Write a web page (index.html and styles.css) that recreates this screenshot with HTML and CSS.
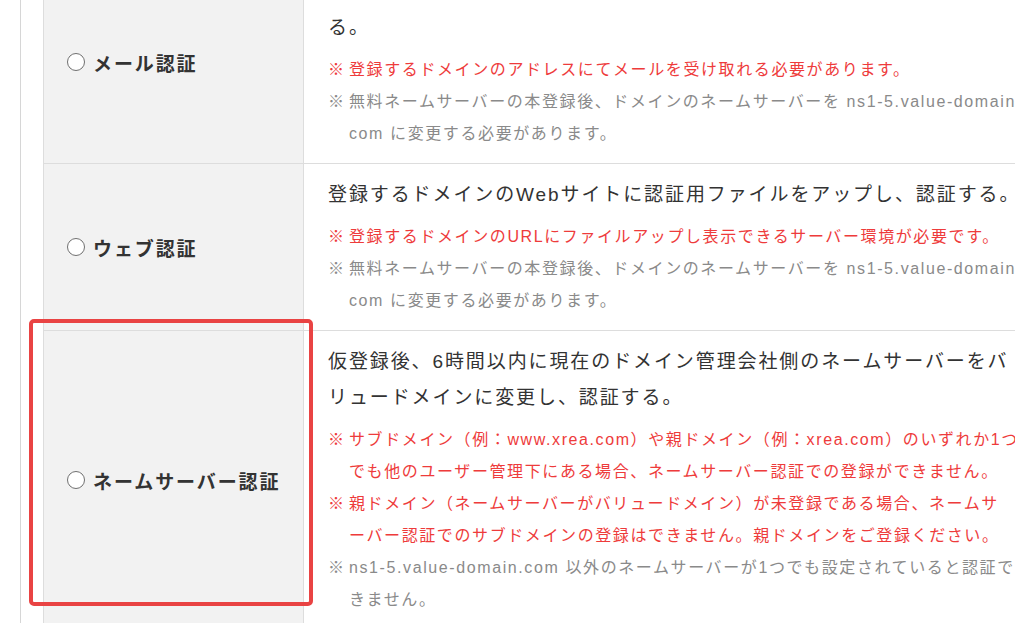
FILE: index.html
```html
<!DOCTYPE html>
<html lang="ja">
<head>
<meta charset="utf-8">
<title>認証方法</title>
<link rel="stylesheet" href="styles.css">
</head>
<body>
<div class="page">
  <div class="frame">
    <div class="table">
      <div class="row">
        <div class="label"><span class="radio"></span><span class="label-text">メール認証</span></div>
        <div class="content">
          <p class="lead">登録するドメインの指定メールアドレス（管理者用のアドレス）で認証する。</p>
          <p class="note warn"><span class="mark">※</span>登録するドメインのアドレスにてメールを受け取れる必要があります。</p>
          <p class="note"><span class="mark">※</span>無料ネームサーバーの本登録後、ドメインのネームサーバーを ns1-5.value-domain.com に変更する必要があります。</p>
        </div>
      </div>
      <div class="row">
        <div class="label"><span class="radio"></span><span class="label-text">ウェブ認証</span></div>
        <div class="content">
          <p class="lead">登録するドメインのWebサイトに認証用ファイルをアップし、認証する。</p>
          <p class="note warn"><span class="mark">※</span>登録するドメインのURLにファイルアップし表示できるサーバー環境が必要です。</p>
          <p class="note"><span class="mark">※</span>無料ネームサーバーの本登録後、ドメインのネームサーバーを ns1-5.value-domain.com に変更する必要があります。</p>
        </div>
      </div>
      <div class="row">
        <div class="label highlighted"><span class="radio"></span><span class="label-text">ネームサーバー認証</span><span class="highlight-box"></span></div>
        <div class="content">
          <p class="lead">仮登録後、6時間以内に現在のドメイン管理会社側のネームサーバーをバリュードメインに変更し、認証する。</p>
          <p class="note warn"><span class="mark">※</span>サブドメイン（例：www.xrea.com）や親ドメイン（例：xrea.com）のいずれか1つでも他のユーザー管理下にある場合、ネームサーバー認証での登録ができません。</p>
          <p class="note warn"><span class="mark">※</span>親ドメイン（ネームサーバーがバリュードメイン）が未登録である場合、ネームサ<br>ーバー認証でのサブドメインの登録はできません。親ドメインをご登録ください。</p>
          <p class="note"><span class="mark">※</span>ns1-5.value-domain.com 以外のネームサーバーが1つでも設定されていると認証できません。</p>
        </div>
      </div>
    </div>
  </div>
</div>
</body>
</html>
```

FILE: styles.css
```css
html, body {
  margin: 0;
  padding: 0;
  background: #ffffff;
  overflow: hidden;
}

body {
  font-family: "Liberation Sans", "Noto Sans CJK JP", sans-serif;
  color: #333333;
  width: 1015px;
  height: 623px;
}

.page {
  padding-left: 20px;
}

.frame {
  border-left: 1px solid #d6d6d6;
  padding-left: 22px;
  height: 700px;
}

.table {
  width: 1002px;
  margin-top: -39px;
  border-left: 1px solid #dddddd;
}

.row {
  display: grid;
  grid-template-columns: 260px 1fr;
  border-bottom: 1px solid #dddddd;
}

.label {
  position: relative;
  display: flex;
  align-items: center;
  gap: 8px;
  padding-left: 23px;
  background: #f2f2f2;
  border-right: 1px solid #dddddd;
  font-size: 19px;
  font-weight: bold;
  letter-spacing: 0.1em;
  color: #333333;
}

.radio {
  flex: none;
  width: 18px;
  height: 18px;
  box-sizing: border-box;
  border: 1.5px solid #707070;
  border-radius: 50%;
  background: #ffffff;
}

.highlight-box {
  position: absolute;
  left: -15px;
  top: -12px;
  width: 284px;
  height: 287px;
  box-sizing: border-box;
  border: 4px solid #e94343;
  border-radius: 5px;
  pointer-events: none;
}

.content {
  padding: 13px 20px 13px 24px;
  min-width: 0;
}

.content p {
  margin: 0;
}

.lead {
  font-size: 19px;
  line-height: 36px;
  letter-spacing: 0.1em;
  color: #333333;
  margin-bottom: 8px !important;
}

.note {
  font-size: 16px;
  line-height: 32px;
  letter-spacing: 0.1em;
  color: #8a8a8a;
  padding-left: 21px;
  text-indent: -21px;
  word-break: break-all;
}

.note.warn {
  color: #ee3b3b;
}

.mark {
  display: inline-block;
  width: 21px;
  text-indent: 0;
}
```
